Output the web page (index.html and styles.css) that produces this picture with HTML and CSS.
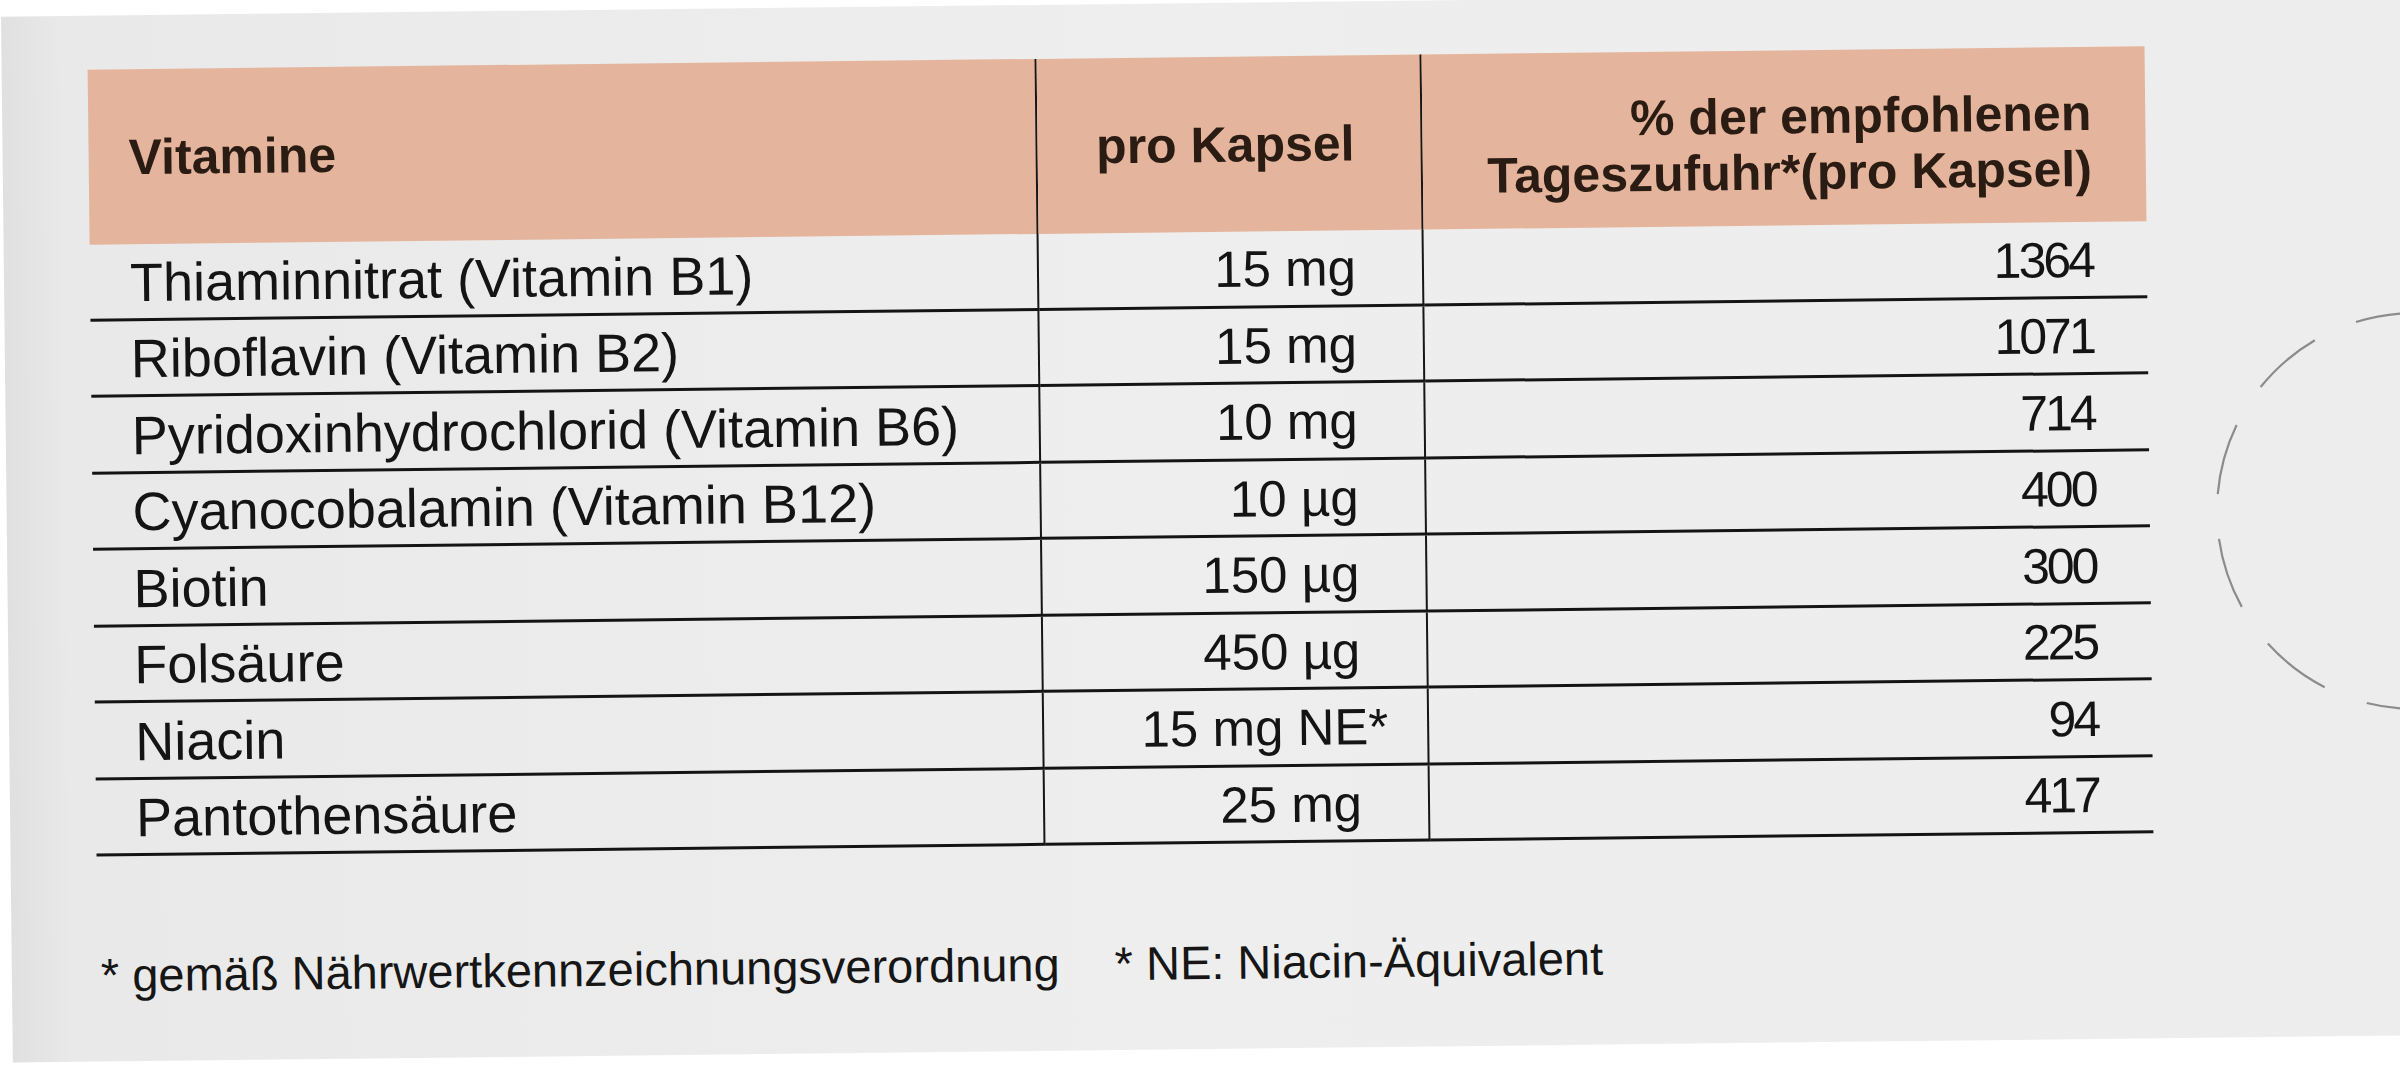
FILE: index.html
```html
<!DOCTYPE html>
<html lang="de">
<head>
<meta charset="utf-8">
<title>Vitamine</title>
<link rel="stylesheet" href="styles.css">
</head>
<body>
<div class="card">
  <div class="table">
    <div class="cell head c1">Vitamine</div>
    <div class="cell head c2">pro Kapsel</div>
    <div class="cell head c3"><div class="head-wrap">% der empfohlenen<br>Tageszufuhr*(pro Kapsel)</div></div>

    <div class="cell row c1">Thiaminnitrat (Vitamin B1)</div>
    <div class="cell row c2">15 mg</div>
    <div class="cell row c3">1364</div>

    <div class="cell row c1">Riboflavin (Vitamin B2)</div>
    <div class="cell row c2">15 mg</div>
    <div class="cell row c3">1071</div>

    <div class="cell row c1">Pyridoxinhydrochlorid (Vitamin B6)</div>
    <div class="cell row c2">10 mg</div>
    <div class="cell row c3">714</div>

    <div class="cell row c1">Cyanocobalamin (Vitamin B12)</div>
    <div class="cell row c2">10 µg</div>
    <div class="cell row c3">400</div>

    <div class="cell row c1">Biotin</div>
    <div class="cell row c2">150 µg</div>
    <div class="cell row c3">300</div>

    <div class="cell row c1">Folsäure</div>
    <div class="cell row c2">450 µg</div>
    <div class="cell row c3">225</div>

    <div class="cell row c1">Niacin</div>
    <div class="cell row c2"><span class="ne">15 mg NE*</span></div>
    <div class="cell row c3">94</div>

    <div class="cell row c1">Pantothensäure</div>
    <div class="cell row c2">25 mg</div>
    <div class="cell row c3">417</div>
  </div>
  <div class="notes">
    <span>* gemäß Nährwertkennzeichnungsverordnung</span>
    <span>* NE: Niacin-Äquivalent</span>
  </div>
</div>
<svg class="perf" width="200" height="420" viewBox="0 0 200 420" aria-hidden="true">
  <path d="M215 13 A198 198 0 0 0 215 409" fill="none" stroke="#8c8c8c" stroke-width="2.2" stroke-dasharray="72 45" stroke-dashoffset="12"/>
</svg>
</body>
</html>
```

FILE: styles.css
```css
html, body {
  margin: 0;
  padding: 0;
  overflow: hidden;
}

body {
  width: 2400px;
  height: 1066px;
  background: #ffffff;
  position: relative;
  font-family: "Liberation Sans", Arial, sans-serif;
  color: #141414;
}

.card {
  width: 2440px;
  height: 1046px;
  margin: 4px 0 0 6px;
  background: linear-gradient(90deg, #e0e0e0 0, #e9e9e9 2.5%, #eeeeee 45%, #ededed 100%);
  transform: rotate(-0.65deg);
  transform-origin: 1112px 446px;
  padding-top: 54px;
  box-sizing: border-box;
}

.table {
  margin-left: 86px;
  width: 2057px;
  display: grid;
  grid-template-columns: 949px 385px 723px;
  grid-template-rows: 175px repeat(8, 76.5px);
}

.cell {
  box-sizing: border-box;
  display: flex;
  align-items: center;
  white-space: nowrap;
}

.c1 {
  padding-left: 40px;
  border-right: 2px solid #161616;
}

.c2 {
  justify-content: flex-end;
  padding-right: 66px;
  border-right: 2px solid #161616;
}

.c3 {
  justify-content: flex-end;
  padding-right: 54px;
}

.head {
  background: #e4b59c;
  font-weight: bold;
  font-size: 50px;
  color: #2a1b13;
}

.head-wrap {
  text-align: right;
  line-height: 56px;
  padding-top: 12px;
}

.row {
  border-bottom: 3px solid #141414;
  padding-top: 2px;
}

.row.c1 {
  font-size: 54px;
}

.row.c2 {
  font-size: 51px;
}

.row.c3 {
  font-size: 50px;
  letter-spacing: -3px;
}

.ne {
  display: inline-block;
  margin-right: -27px;
}

.notes {
  margin: 92px 0 0 89px;
  display: flex;
  gap: 55px;
  font-size: 47px;
  line-height: 54px;
  white-space: nowrap;
  color: #161616;
}

.perf {
  position: absolute;
  left: 2200px;
  top: 300px;
}
```
